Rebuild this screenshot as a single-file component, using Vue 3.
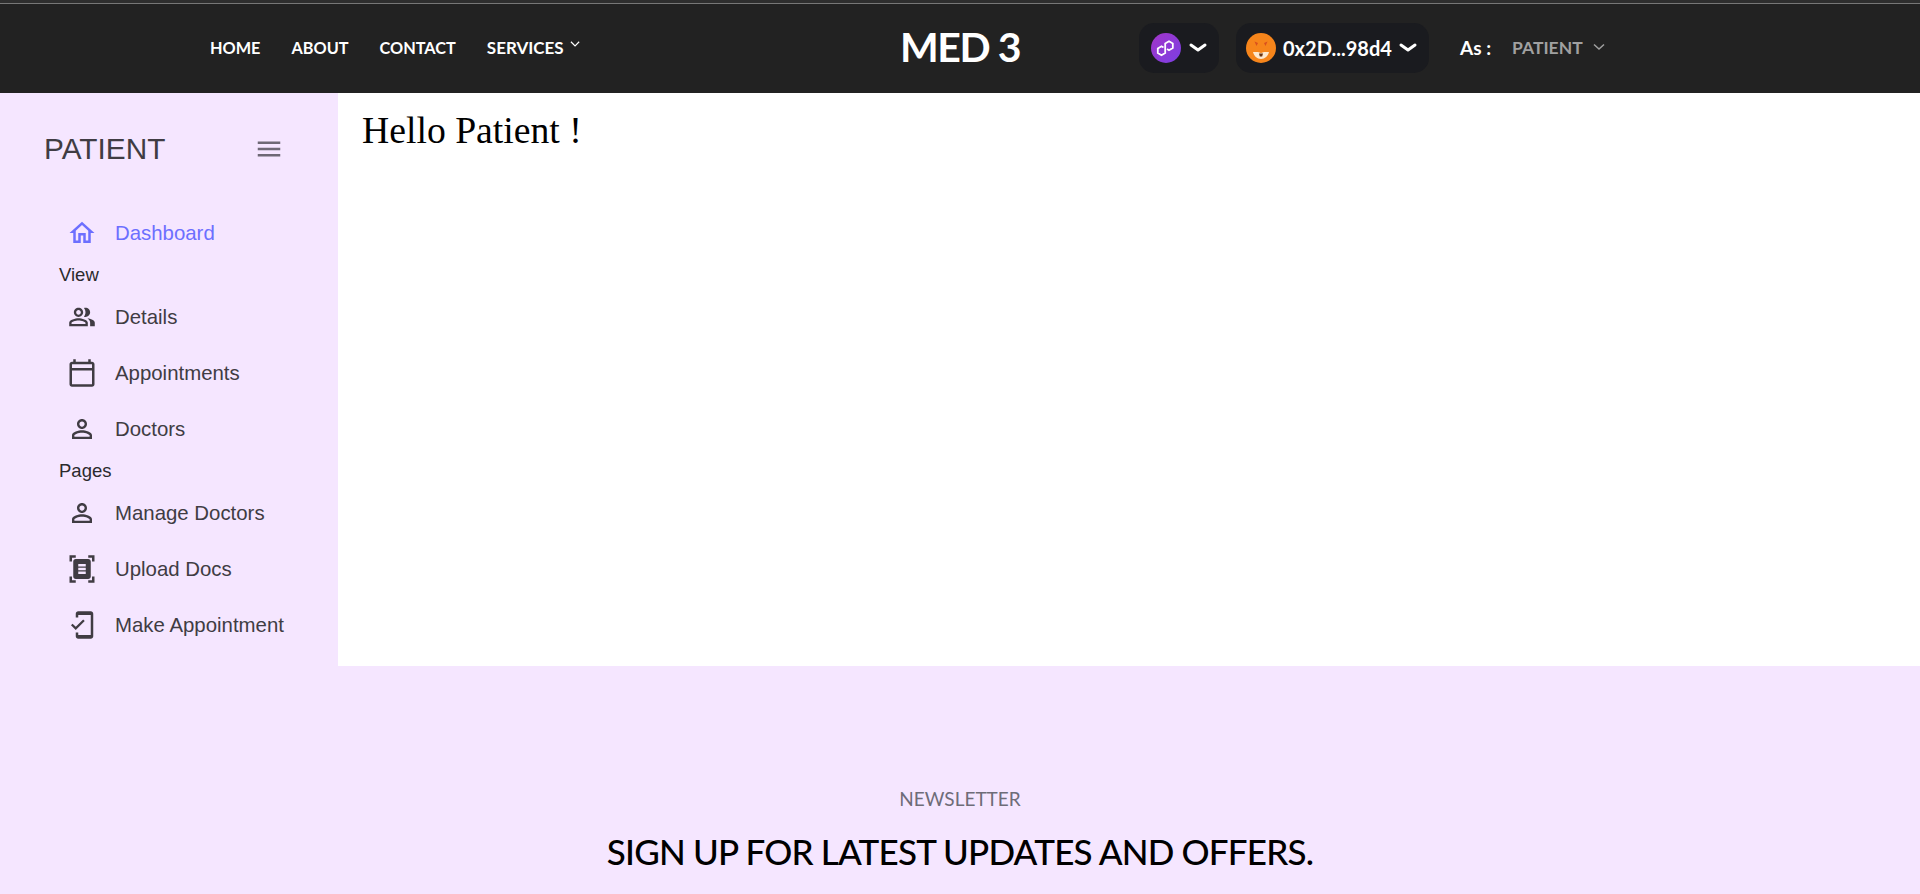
<template>
  <div class="page">
    <header class="topbar">
      <nav class="nav">
        <a v-for="item in navItems" :key="item" class="nav-link">{{ item }}</a>
        <a class="nav-link services">
          SERVICES
          <svg class="caret" viewBox="0 0 12 8" width="11" height="8"><path d="M1 1.500l4.500 4.500L10 1.500" fill="none" stroke="#fff" stroke-width="1.300" /></svg>
        </a>
      </nav>
      <div class="logo">MED 3</div>
      <div class="wallet">
        <button class="pill network">
          <span class="coin polygon">
            <svg viewBox="0 0 30 30" width="30" height="30">
              <path d="M12.500 14.500L10.500 13.300 6.800 15.500V20l3.700 2.200 3.700-2.200v-9.500L18 8.300l3.800 2.200V15L18 17.200 16 16" fill="none" stroke="#fff" stroke-width="1.800" />
            </svg>
          </span>
          <svg class="chev" viewBox="0 0 18 12" width="18" height="12"><path d="M2 3l7 5 7-5" fill="none" stroke="#fff" stroke-width="3" stroke-linecap="round" stroke-linejoin="round" /></svg>
        </button>
        <button class="pill account">
          <span class="coin fox">
            <svg viewBox="0 0 30 30" width="30" height="30">
              <path d="M8.500 8.500l3.500 1.500-1.500 3zM21.500 8.500L18 10l1.500 3z" fill="#d9501e" />
              <path d="M7 19h5l3 1 3-1h5c-1 4-4 7-8 7s-7-3-8-7z" fill="#fde8cf" />
              <path d="M13 20.500h4l-.8 3h-2.400z" fill="#6b3413" />
            </svg>
          </span>
          <span class="address">0x2D...98d4</span>
          <svg class="chev" viewBox="0 0 18 12" width="18" height="12"><path d="M2 3l7 5 7-5" fill="none" stroke="#fff" stroke-width="3" stroke-linecap="round" stroke-linejoin="round" /></svg>
        </button>
        <div class="role">
          <span class="as">As :</span>
          <span class="role-name">PATIENT</span>
          <svg viewBox="0 0 12 8" width="12" height="8"><path d="M1 1.500l5 4.500 5-4.500" fill="none" stroke="#a0a0a0" stroke-width="1.500" /></svg>
        </div>
      </div>
    </header>

    <div class="body-row">
      <aside class="sidebar">
        <div class="side-head">
          <span class="side-title">PATIENT</span>
          <svg class="menu" viewBox="0 0 24 24" width="30" height="30"><path d="M3 18h18v-2H3v2zm0-5h18v-2H3v2zm0-7v2h18V6H3z" fill="#6e6875" /></svg>
        </div>
        <div class="menu-list">
          <template v-for="row in menu" :key="row.label">
            <div v-if="row.section" class="section">{{ row.label }}</div>
            <a v-else class="menu-item" :class="{ active: row.active, small: row.small }">
              <svg viewBox="0 0 24 24" width="30" height="30"><path :d="row.icon" fill-rule="evenodd" /></svg>
              <span>{{ row.label }}</span>
            </a>
          </template>
        </div>
      </aside>
      <main class="content">Hello Patient !</main>
    </div>

    <footer class="newsletter">
      <div class="kicker">NEWSLETTER</div>
      <h2 class="signup">SIGN UP FOR LATEST UPDATES AND OFFERS.</h2>
    </footer>
  </div>
</template>

<script setup>
const navItems = ["HOME", "ABOUT", "CONTACT"];

const personIcon =
  "M12 5.900c1.160 0 2.100.94 2.100 2.100s-.94 2.100-2.100 2.100S9.900 9.160 9.900 8s.94-2.100 2.100-2.100m0 9c2.970 0 6.100 1.460 6.100 2.100v1.100H5.900V17c0-.64 3.130-2.100 6.100-2.100M12 4C9.790 4 8 5.790 8 8s1.790 4 4 4 4-1.790 4-4-1.790-4-4-4zm0 9c-2.670 0-8 1.340-8 4v3h16v-3c0-2.660-5.330-4-8-4z";

const menu = [
  { label: "Dashboard", active: true, icon: "m12 5.690 5 4.500V18h-2v-6H9v6H7v-7.810l5-4.500M12 3 2 12h3v8h6v-6h2v6h6v-8h3L12 3z" },
  { label: "View", section: true },
  { label: "Details", small: true, icon: "M16.670 13.130C18.040 14.060 19 15.320 19 17v3h4v-3c0-2.180-3.570-3.470-6.330-3.870zM15 12c2.210 0 4-1.790 4-4s-1.790-4-4-4c-.47 0-.91.1-1.330.24C14.500 5.270 15 6.580 15 8s-.5 2.730-1.330 3.760c.42.14.86.24 1.330.24zM9 12c2.210 0 4-1.790 4-4s-1.790-4-4-4-4 1.790-4 4 1.790 4 4 4zm0-6c1.100 0 2 .9 2 2s-.9 2-2 2-2-.9-2-2 .9-2 2-2zM9 13c-2.670 0-8 1.340-8 4v3h16v-3c0-2.660-5.330-4-8-4zm6 5H3v-.99C3.200 16.290 6.300 15 9 15s5.800 1.290 6 2v1z" },
  { label: "Appointments", icon: "M20 3h-1V1h-2v2H7V1H5v2H4c-1.100 0-2 .9-2 2v16c0 1.100.9 2 2 2h16c1.100 0 2-.9 2-2V5c0-1.100-.9-2-2-2zm0 18H4V10h16v11zm0-13H4V5h16v3z" },
  { label: "Doctors", icon: personIcon },
  { label: "Pages", section: true },
  { label: "Manage Doctors", icon: personIcon },
  { label: "Upload Docs", icon: "M7 3H4v3H2V1h5v2zm15 3V1h-5v2h3v3h2zM7 21H4v-3H2v5h5v-2zm13-3v3h-3v2h5v-5h-2zM19 18c0 1.100-.9 2-2 2H7c-1.100 0-2-.9-2-2V6c0-1.100.9-2 2-2h10c1.100 0 2 .9 2 2v12zM15 8H9v2h6V8zm0 3H9v2h6v-2zm0 3H9v2h6v-2z" },
  { label: "Make Appointment", icon: "M19 1H9c-1.100 0-2 .9-2 2v3h2V4h10v16H9v-2H7v3c0 1.100.9 2 2 2h10c1.100 0 2-.9 2-2V3c0-1.100-.9-2-2-2zM7.010 13.470l-2.550-2.550-1.270 1.270L7 16l7.190-7.190-1.270-1.270-5.910 5.930z" },
];
</script>

<style>
html,
body {
  margin: 0;
  overflow: hidden;
}
</style>

<style scoped>
.page {
  height: 894px;
  overflow: hidden;
  background: #f5e6ff;
}

.topbar {
  height: 90px;
  border-top: 3px solid #2e2e2e;
  box-shadow: inset 0 1px 0 #777;
  background: #222;
  display: flex;
  align-items: center;
  padding-left: 210px;
  font-family: Lato, "Open Sans", sans-serif;
  color: #fff;
}

.nav {
  display: flex;
  align-items: center;
  gap: 31px;
  width: 690px;
  margin-top: -2px;
}

.nav-link {
  font-size: 16.300px;
  font-weight: 700;
  white-space: nowrap;
}

.services {
  display: flex;
  align-items: center;
  gap: 6px;
  font-size: 17px;
}

.caret {
  margin-top: -6px;
}

.logo {
  width: 239px;
  margin-top: -3px;
  font-size: 41px;
  font-weight: 700;
  letter-spacing: -1.400px;
  white-space: nowrap;
}

.wallet {
  display: flex;
  align-items: center;
}

.pill {
  height: 50px;
  border: none;
  border-radius: 15px;
  background: #1a1b1f;
  color: #fff;
  display: flex;
  align-items: center;
  padding: 0 12px;
  font-family: inherit;
}

.network {
  width: 80px;
  gap: 8px;
  margin-right: 17px;
}

.account {
  width: 193px;
  gap: 7px;
  padding-left: 10px;
  margin-right: 31px;
}

.coin {
  width: 30px;
  height: 30px;
  border-radius: 50%;
  flex: none;
  overflow: hidden;
}

.coin svg {
  display: block;
}

.polygon {
  background: linear-gradient(135deg, #a235c8, #7b3fe4);
}

.fox {
  background: #f6851b;
}

.address {
  font-size: 20px;
  font-weight: 700;
  white-space: nowrap;
}

.chev {
  flex: none;
}

.role {
  display: flex;
  align-items: center;
  font-size: 17.500px;
  margin-top: -2px;
}

.as {
  font-weight: 700;
  font-size: 19px;
  margin-right: 21px;
}

.role-name {
  color: #a0a0a0;
  font-weight: 700;
  margin-right: 10px;
}

.body-row {
  display: flex;
  height: 573px;
}

.sidebar {
  width: 338px;
  flex: none;
  font-family: "Liberation Sans", Arial, sans-serif;
  color: #403c43;
}

.side-head {
  display: flex;
  align-items: center;
  justify-content: space-between;
  padding: 39px 54px 0 44px;
}

.side-title {
  font-size: 29.800px;
}

.menu {
  display: block;
}

.menu-list {
  margin-top: 39px;
  padding-left: 59px;
}

.section {
  font-size: 18.500px;
  line-height: 28px;
  color: #2b2a2d;
}

.menu-item {
  display: flex;
  align-items: center;
  gap: 18px;
  height: 56px;
  font-size: 20.400px;
  margin-left: 8px;
  white-space: nowrap;
}

.menu-item svg {
  fill: #403c43;
  flex: none;
}

.menu-item.small svg {
  transform: scale(0.93);
}

.menu-item.active {
  color: #6c6fff;
}

.menu-item.active svg {
  fill: #6c6fff;
}

.content {
  flex: 1;
  background: #fff;
  padding: 15px 0 0 24px;
  font-family: "Liberation Serif", "Times New Roman", serif;
  font-size: 37.700px;
  line-height: 44px;
  color: #000;
}

.newsletter {
  padding-top: 122px;
  text-align: center;
  font-family: Lato, "Open Sans", sans-serif;
}

.kicker {
  font-size: 19px;
  line-height: 22px;
  color: #6e6c78;
}

.signup {
  margin: 21px 0 0;
  font-size: 35px;
  letter-spacing: -0.800px;
  line-height: 40px;
  font-weight: 500;
  color: #000;
}
</style>
